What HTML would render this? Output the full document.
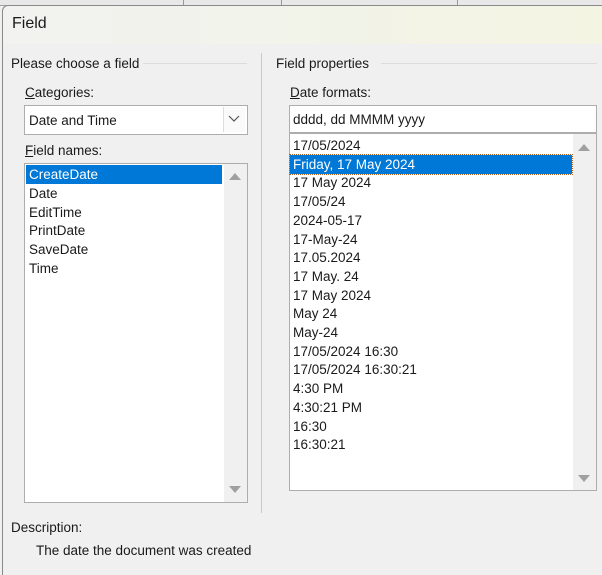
<!DOCTYPE html>
<html><head><style>
*{margin:0;padding:0;box-sizing:border-box}
body{width:602px;height:575px;overflow:hidden;background:#f0f0f0;font-family:"Liberation Sans",sans-serif;font-size:13.5px;color:#1a1a1a;position:relative}
.a{position:absolute}
.t{position:absolute;white-space:nowrap;line-height:18px}
.box{position:absolute;background:#fff;border:1px solid #adadad}
.sel{position:absolute;background:#0078d7;color:#fff}
.tri{position:absolute;width:0;height:0;border-left:6px solid transparent;border-right:6px solid transparent}
</style></head><body>
<div class="a" style="left:0;top:0;width:602px;height:6px;background:#e8e8e8;border-bottom:1px solid #a0a0a0"></div>
<div class="a" style="left:183px;top:0;width:1px;height:5px;background:#999"></div>
<div class="a" style="left:281px;top:0;width:1px;height:5px;background:#999"></div>
<div class="a" style="left:457px;top:0;width:1px;height:5px;background:#999"></div>
<div class="a" style="left:2px;top:5px;width:600px;height:570px;background:#f0f0f0;border-left:1px solid #8a8a8a;border-top:1px solid #8a8a8a;border-radius:6px 0 0 0"></div>
<div class="a" style="left:3px;top:6px;width:599px;height:38px;background:linear-gradient(90deg,#f2f2f0,#f3f4e2);border-radius:6px 0 0 0"></div>
<div class="t" style="left:12px;top:15px;font-size:16px">Field</div>

<div class="t" style="left:11px;top:55px">Please choose a field</div>
<div class="a" style="left:143px;top:63px;width:104px;height:1px;background:#dcdcdc"></div>
<div class="a" style="left:261px;top:53px;width:1px;height:460px;background:#c8c8c8"></div>
<div class="t" style="left:276px;top:55px">Field properties</div>
<div class="a" style="left:381px;top:63px;width:216px;height:1px;background:#dcdcdc"></div>

<div class="t" style="left:25px;top:84px"><u>C</u>ategories:</div>
<div class="box" style="left:24px;top:105px;width:224px;height:30px"></div>
<div class="t" style="left:29px;top:112px">Date and Time</div>
<div class="a" style="left:223px;top:107px;width:22px;height:25px;background:#fafafa;border-left:1px solid #dcdcdc"></div>
<svg class="a" style="left:228px;top:114px" width="12" height="8"><path d="M1 2 L6 7 L11 2" fill="none" stroke="#555" stroke-width="1.2"/></svg>

<div class="t" style="left:25px;top:142px"><u>F</u>ield names:</div>
<div class="box" style="left:24px;top:163px;width:224px;height:340px"></div>
<div class="a" style="left:224px;top:164px;width:23px;height:338px;background:#f0f0f0"></div>
<div class="tri" style="left:229px;top:173px;border-bottom:7px solid #a0a0a0"></div>
<div class="tri" style="left:229px;top:486px;border-top:7px solid #a0a0a0"></div>
<div class="sel" style="left:26px;top:165px;width:196px;height:19px"></div>
<div class="t" style="left:29px;top:166px;color:#fff">CreateDate</div>
<div class="t" style="left:29px;top:185px">Date</div>
<div class="t" style="left:29px;top:204px">EditTime</div>
<div class="t" style="left:29px;top:222px">PrintDate</div>
<div class="t" style="left:29px;top:241px">SaveDate</div>
<div class="t" style="left:29px;top:260px">Time</div>

<div class="t" style="left:290px;top:84px"><u>D</u>ate formats:</div>
<div class="box" style="left:289px;top:105px;width:308px;height:28px"></div>
<div class="t" style="left:293px;top:111px">dddd, dd MMMM yyyy</div>
<div class="box" style="left:289px;top:133px;width:308px;height:358px"></div>
<div class="a" style="left:573px;top:134px;width:23px;height:356px;background:#f0f0f0"></div>
<div class="tri" style="left:578px;top:144px;border-bottom:7px solid #a0a0a0"></div>
<div class="tri" style="left:578px;top:475px;border-top:7px solid #a0a0a0"></div>
<div class="sel" style="left:290px;top:155px;width:282px;height:19px;outline:1px dotted #b06020"></div>
<div style="position:absolute;left:293px;top:137px;line-height:18.7px">
17/05/2024<br><span style="color:#fff">Friday, 17 May 2024</span><br>17 May 2024<br>17/05/24<br>2024-05-17<br>17-May-24<br>17.05.2024<br>17 May. 24<br>17 May 2024<br>May 24<br>May-24<br>17/05/2024 16:30<br>17/05/2024 16:30:21<br>4:30 PM<br>4:30:21 PM<br>16:30<br>16:30:21
</div>

<div class="t" style="left:11px;top:519px">Description:</div>
<div class="t" style="left:36px;top:542px">The date the document was created</div>
</body></html>
